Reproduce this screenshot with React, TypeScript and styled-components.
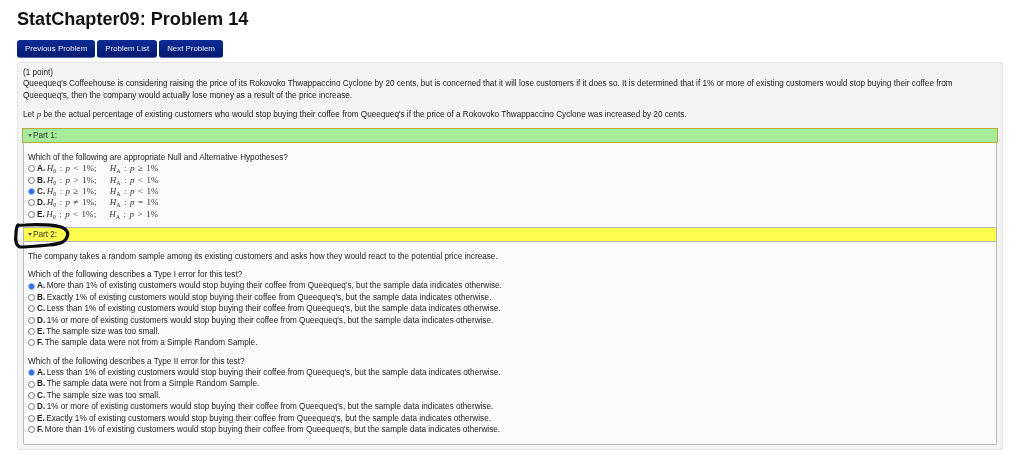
import React from "react";
import styled, { createGlobalStyle } from "styled-components";

const Global = createGlobalStyle`
  html, body { margin: 0; padding: 0; background: #fff; }
  body { font-family: "Liberation Sans", Arial, sans-serif; color: #222; overflow: hidden; }
`;
const Page = styled.div`
  position: relative;
  width: 1024px;
  height: 462px;
  padding: 9px 21px 0 17px;
  box-sizing: border-box;
  filter: blur(0.3px);
`;
const Title = styled.h1`
  margin: 0;
  font-size: 18.1px;
  line-height: 21px;
  font-weight: 700;
  color: #111;
`;
const Toolbar = styled.div`
  display: flex;
  gap: 2px;
  margin-top: 10px;
`;
const NavButton = styled.div`
  height: 18px;
  box-sizing: border-box;
  padding: 0 8px;
  display: flex;
  align-items: center;
  font-size: 7.9px;
  color: #e8ecff;
  background: linear-gradient(#0c2c94, #051a70);
  border-radius: 3px;
  border-bottom: 1px solid #5a6ab0;
`;
const Panel = styled.div`
  margin-top: 4px;
  height: 388px;
  box-sizing: border-box;
  padding: 4px 5px 0;
  background: #f4f4f4;
  border: 1px solid #e6e6e6;
  border-radius: 2px;
  font-size: 8.18px;
  line-height: 11.4px;
  color: #222;
`;
const Para = styled.div<{ $mb?: number }>`
  margin-bottom: ${(p) => p.$mb ?? 0}px;
`;
const Header = styled.div<{ $bg: string; $border: string; $outset?: boolean }>`
  height: 15px;
  box-sizing: border-box;
  display: flex;
  align-items: center;
  gap: 1px;
  padding-left: ${(p) => (p.$outset ? 5 : 4)}px;
  margin: 0 ${(p) => (p.$outset ? -1 : 0)}px;
  background: ${(p) => p.$bg};
  border: 1px solid ${(p) => p.$border};
  color: #333;
`;
const Caret = styled.span`
  width: 0;
  height: 0;
  border-left: 2.5px solid transparent;
  border-right: 2.5px solid transparent;
  border-top: 3px solid #555;
`;
const Body = styled.div<{ $height: number }>`
  height: ${(p) => p.$height}px;
  box-sizing: border-box;
  padding: 8.5px 0 0 4px;
  background: #fbfbfb;
  border-left: 1px solid #bbb;
  border-right: 1px solid #bbb;
`;
const LastBody = styled(Body)`
  border-bottom: 1px solid #bbb;
  border-radius: 0 0 2px 2px;
`;
const Option = styled.label`
  display: flex;
  align-items: center;
  height: 11.4px;
  white-space: nowrap;
`;
const Radio = styled.span<{ $on?: boolean }>`
  flex: none;
  width: 7px;
  height: 7px;
  margin-right: 2px;
  border-radius: 50%;
  box-sizing: border-box;
  background: ${(p) => (p.$on ? "#2f6fe0" : "#fff")};
  border: ${(p) => (p.$on ? "1.5px solid #8fb4ee" : "0.75px solid #777")};
`;
const Key = styled.b`
  font-weight: 700;
  margin-right: 1.5px;
`;
const Formula = styled.span`
  font-family: "Liberation Serif", "DejaVu Serif", serif;
  font-size: 9px;
  word-spacing: 1.2px;
  white-space: pre;
  color: #333;
  i { font-style: italic; }
  sub { font-size: 6px; line-height: 0; vertical-align: -1.5px; }
`;
const HypA = styled.span`
  display: inline-block;
  width: 63px;
`;
const Spacer = styled.div<{ $h: number }>`
  height: ${(p) => p.$h}px;
`;
const Ink = styled.svg`
  position: absolute;
  left: 13px;
  top: 220px;
  width: 60px;
  height: 30px;
  overflow: visible;
`;

const P = <i>p</i>;
const hyp = [
  ["A", "< 1%", "≥ 1%", false],
  ["B", "> 1%", "< 1%", false],
  ["C", "≥ 1%", "< 1%", true],
  ["D", "≠ 1%", "= 1%", false],
  ["E", "< 1%", "> 1%", false],
] as const;

type Item = [string, string, boolean?];
const type1: Item[] = [
  ["A.", "More than 1% of existing customers would stop buying their coffee from Queequeq's, but the sample data indicates otherwise.", true],
  ["B.", "Exactly 1% of existing customers would stop buying their coffee from Queequeq's, but the sample data indicates otherwise."],
  ["C.", "Less than 1% of existing customers would stop buying their coffee from Queequeq's, but the sample data indicates otherwise."],
  ["D.", "1% or more of existing customers would stop buying their coffee from Queequeq's, but the sample data indicates otherwise."],
  ["E.", "The sample size was too small."],
  ["F.", "The sample data were not from a Simple Random Sample."],
];
const type2: Item[] = [
  ["A.", "Less than 1% of existing customers would stop buying their coffee from Queequeq's, but the sample data indicates otherwise.", true],
  ["B.", "The sample data were not from a Simple Random Sample."],
  ["C.", "The sample size was too small."],
  ["D.", "1% or more of existing customers would stop buying their coffee from Queequeq's, but the sample data indicates otherwise."],
  ["E.", "Exactly 1% of existing customers would stop buying their coffee from Queequeq's, but the sample data indicates otherwise."],
  ["F.", "More than 1% of existing customers would stop buying their coffee from Queequeq's, but the sample data indicates otherwise."],
];

const Options = ({ items }: { items: Item[] }) => (
  <>
    {items.map(([k, t, on]) => (
      <Option key={k}>
        <Radio $on={on} />
        <Key>{k}</Key>
        {t}
      </Option>
    ))}
  </>
);

export default function App() {
  return (
    <Page>
      <Global />
      <Title>StatChapter09: Problem 14</Title>
      <Toolbar>
        <NavButton>Previous Problem</NavButton>
        <NavButton>Problem List</NavButton>
        <NavButton>Next Problem</NavButton>
      </Toolbar>
      <Panel>
        <Para>(1 point)</Para>
        <Para $mb={7.6}>
          Queequeq's Coffeehouse is considering raising the price of its Rokovoko Thwappaccino Cyclone by 20 cents, but is concerned that it will lose customers if it does so. It is determined that if 1% or more of existing customers would stop buying their coffee from
          <br />
          Queequeq's, then the company would actually lose money as a result of the price increase.
        </Para>
        <Para $mb={8}>
          Let <Formula>{P}</Formula> be the actual percentage of existing customers who would stop buying their coffee from Queequeq's if the price of a Rokovoko Thwappaccino Cyclone was increased by 20 cents.
        </Para>
        <Header $bg="#a6ec9a" $border="#b8aa3c" $outset>
          <Caret />
          Part 1:
        </Header>
        <Body $height={84}>
          <Para>Which of the following are appropriate Null and Alternative Hypotheses?</Para>
          {hyp.map(([k, a, b, on]) => (
            <Option key={k}>
              <Radio $on={on} />
              <Key>{k}.</Key>
              <Formula>
                <HypA>
                  <i>H</i>
                  <sub>0</sub> : {P} {a};
                </HypA>
                <i>H</i>
                <sub>A</sub> : {P} {b}
              </Formula>
            </Option>
          ))}
        </Body>
        <Header $bg="#fdfd4e" $border="#b5b5b5">
          <Caret />
          Part 2:
        </Header>
        <LastBody $height={202.3}>
          <Para $mb={6.8}>The company takes a random sample among its existing customers and asks how they would react to the potential price increase.</Para>
          <Para>Which of the following describes a Type I error for this test?</Para>
          <Options items={type1} />
          <Spacer $h={7} />
          <Para>Which of the following describes a Type II error for this test?</Para>
          <Options items={type2} />
        </LastBody>
      </Panel>
      <Ink viewBox="0 0 60 30">
        <path
          d="M4 7 C4 5 6 5 12 5 C25 4 42 5 48 7 C54 9 56 13 54 17 C52 23 45 24 36 25 C25 26 12 27 7 27 C3 26 2 20 3 14 C3 10 3 8 5 5"
          fill="none"
          stroke="#0a0a0a"
          strokeWidth="3.2"
          strokeLinecap="round"
        />
      </Ink>
    </Page>
  );
}
